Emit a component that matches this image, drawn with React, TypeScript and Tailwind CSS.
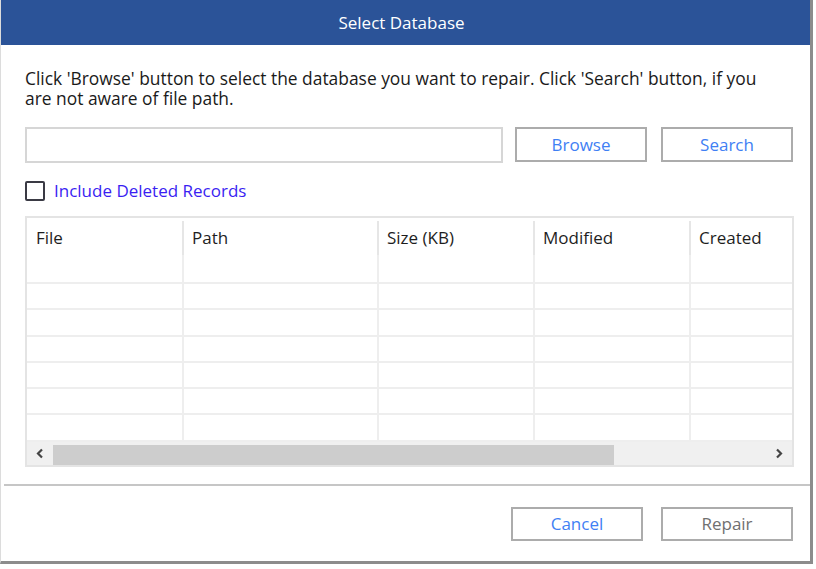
export default function App() {
  const cols = [
    { name: 'File', w: 'w-[155px]' },
    { name: 'Path', w: 'w-[195px]' },
    { name: 'Size (KB)', w: 'w-[156px]' },
    { name: 'Modified', w: 'w-[156px]' },
    { name: 'Created', w: 'flex-1' },
  ];
  const rows = [0, 1, 2, 3, 4, 5, 6];

  return (
    <div
      className="w-[816px] h-[569px] bg-white overflow-hidden"
      style={{ fontFamily: '"Open Sans", "Noto Sans", sans-serif' }}
    >
      <div className="w-[813px] h-[564px] border-l border-[#dcdcdc] border-r-[3px] border-b-[3px] border-r-[#8c8c8c] border-b-[#8c8c8c] flex flex-col">
        {/* title bar */}
        <div className="h-[45px] bg-[#2b5398] flex items-center justify-center pr-[8px] text-white text-[17px] shrink-0">
          Select Database
        </div>

        <div className="pl-[24px] pr-[17px]">
          <p className="pt-[23px] text-[17.4px] font-medium leading-[20px] text-[#1a1a1a] whitespace-nowrap">
            Click 'Browse' button to select the database you want to repair. Click 'Search' button, if you
            <br />
            are not aware of file path.
          </p>

          <div className="mt-[19px] flex items-start">
            <div className="w-[478px] h-[36px] border-2 border-[#d6d6d6]"></div>
            <button className="ml-[12px] w-[132px] h-[35px] border-2 border-[#acacac] text-[#3f80f4] text-[17px]">
              Browse
            </button>
            <button className="ml-[14px] w-[132px] h-[35px] border-2 border-[#acacac] text-[#3f80f4] text-[17px]">
              Search
            </button>
          </div>

          <div className="mt-[17px] flex items-center h-[21px]">
            <div className="w-[20px] h-[20px] border-2 border-[#3a3a44] rounded-[2px]"></div>
            <span className="ml-[9px] text-[17px] font-medium text-[#3a1ef2]">Include Deleted Records</span>
          </div>

          {/* table */}
          <div className="mt-[15px] w-[769px] h-[251px] border-2 border-[#e4e4e4] flex flex-col">
            <div className="h-[37px] flex shrink-0">
              {cols.map((c, i) => (
                <div key={c.name} className={`${c.w} h-full flex pt-[3px]`}>
                  <div
                    className={`h-[34px] w-full flex items-center text-[17px] font-medium text-[#1e1e1e] ${
                      i > 0 ? 'border-l-2 border-[#e6e6e6] pl-[8px]' : 'pl-[9px]'
                    }`}
                  >
                    {c.name}
                  </div>
                </div>
              ))}
            </div>
            {rows.map((r) => (
              <div key={r} className={`flex ${r === 0 ? 'h-[27px]' : 'h-[26.3px] border-t-2 border-[#eeeeee]'}`}>
                {cols.map((c, i) => (
                  <div
                    key={c.name}
                    className={`${c.w} h-full ${i > 0 ? 'border-l-2 border-[#eeeeee]' : ''}`}
                  ></div>
                ))}
              </div>
            ))}
            <div className="h-[2px] bg-[#eeeeee] shrink-0"></div>
            <div className="flex-1 bg-[#f0f0f0] flex items-stretch">
              <div className="w-[26px] flex items-center justify-center">
                <svg width="8" height="11" viewBox="0 0 8 11">
                  <polyline points="6,1.5 2,5.5 6,9.5" fill="none" stroke="#444" strokeWidth="2.2" />
                </svg>
              </div>
              <div className="w-[561px] mt-[3px] bg-[#cdcdcd]"></div>
              <div className="flex-1"></div>
              <div className="w-[26px] flex items-center justify-center">
                <svg width="8" height="11" viewBox="0 0 8 11">
                  <polyline points="2,1.5 6,5.5 2,9.5" fill="none" stroke="#444" strokeWidth="2.2" />
                </svg>
              </div>
            </div>
          </div>
        </div>

        <div className="mt-[17px] ml-[3px] h-[2px] bg-[#c6c6c6]"></div>

        <div className="mt-[21px] pr-[17px] flex justify-end">
          <button className="w-[132px] h-[34px] border-2 border-[#acacac] text-[#3f80f4] text-[17px]">
            Cancel
          </button>
          <button className="ml-[18px] w-[132px] h-[34px] border-2 border-[#acacac] text-[#707070] text-[17px]">
            Repair
          </button>
        </div>
      </div>
    </div>
  );
}
